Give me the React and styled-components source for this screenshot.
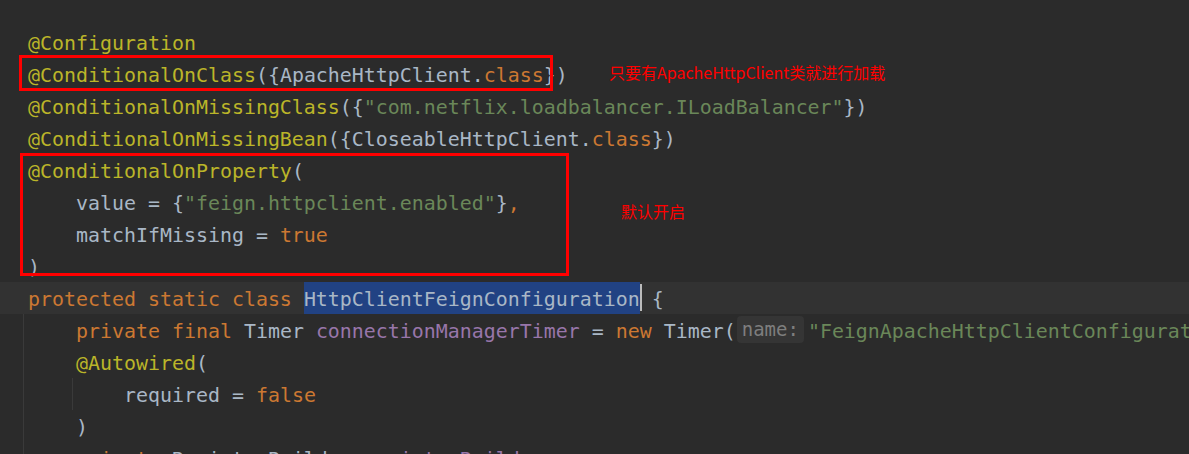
import styled, { createGlobalStyle } from 'styled-components'

const GlobalStyle = createGlobalStyle`
  html, body {
    margin: 0;
    padding: 0;
    background: #2b2b2b;
  }
`

const colors = {
  plain: '#a9b7c6',
  ann: '#bbb529',
  kw: '#cc7832',
  str: '#6a8759',
  field: '#9876aa',
}

const Screen = styled.div`
  position: relative;
  width: 1189px;
  height: 454px;
  overflow: hidden;
  background: #2b2b2b;
`

const Editor = styled.div`
  padding: 26px 0 0 28px;
  font-family: "DejaVu Sans Mono", "Liberation Mono", monospace;
  font-size: 19.93px;
  color: ${colors.plain};
`

// each row is 32px; text sits 2px lower than the row box like the IDE does
const Line = styled.div`
  height: 30px;
  padding-top: 2px;
  line-height: 32px;
  white-space: pre;
  margin-left: -28px;
  padding-left: 28px;
  background: ${(p) => (p.$current ? '#323232' : 'transparent')};
`

const Block = styled.div`
  margin-left: ${(p) => p.$offset || -5}px;
  padding-left: ${(p) => p.$pad || 4}px;
  border-left: 1px solid #3a3a3a;

  ${Line} {
    margin-left: 0;
    padding-left: 0;
  }
`

const Tok = styled.span`
  color: ${(p) => colors[p.$k] || colors.plain};
`

const Selection = styled.span`
  display: inline-block;
  height: 32px;
  margin-top: -2px;
  line-height: 36px;
  background: #214283;
  vertical-align: top;
`

const Caret = styled.span`
  display: inline-block;
  width: 2px;
  height: 27px;
  margin: 0 -2px 0 0;
  background: #bbbbbb;
  vertical-align: top;
`

const Hint = styled.span`
  display: inline-block;
  height: 27px;
  line-height: 27px;
  margin: 0 4px 0 1px;
  padding: 0 5px 0 5px;
  border-radius: 4px;
  background: #353535;
  color: #7e7e7e;
  font-size: 19px;
  vertical-align: top;
`

const Frame = styled.div`
  position: absolute;
  left: ${(p) => p.$x}px;
  top: ${(p) => p.$y}px;
  width: ${(p) => p.$w}px;
  height: ${(p) => p.$h}px;
  box-sizing: border-box;
  border: 3px solid #ff0000;
  pointer-events: none;
`

const Note = styled.div`
  position: absolute;
  left: ${(p) => p.$x}px;
  top: ${(p) => p.$y}px;
  font-family: "Noto Sans CJK SC", "Noto Sans", sans-serif;
  font-size: 16px;
  line-height: 20px;
  color: #ff0000;
  white-space: nowrap;
`

const App = () => {
  return (
    <Screen>
      <GlobalStyle />
      <Editor>
        <Line><Tok $k="ann">@Configuration</Tok></Line>
        <Line>
          <Tok $k="ann">@ConditionalOnClass</Tok>({'{'}ApacheHttpClient.<Tok $k="kw">class</Tok>{'})'}
        </Line>
        <Line>
          <Tok $k="ann">@ConditionalOnMissingClass</Tok>({'{'}
          <Tok $k="str">"com.netflix.loadbalancer.ILoadBalancer"</Tok>{'})'}
        </Line>
        <Line>
          <Tok $k="ann">@ConditionalOnMissingBean</Tok>({'{'}CloseableHttpClient.<Tok $k="kw">class</Tok>{'})'}
        </Line>
        <Line><Tok $k="ann">@ConditionalOnProperty</Tok>(</Line>
        <Line>
          {'    value = {'}<Tok $k="str">"feign.httpclient.enabled"</Tok>{'}'}<Tok $k="kw">,</Tok>
        </Line>
        <Line>
          {'    matchIfMissing = '}<Tok $k="kw">true</Tok>
        </Line>
        <Line>)</Line>
        <Line $current>
          <Tok $k="kw">protected static class </Tok>
          <Selection>HttpClientFeignConfiguration</Selection>
          <Caret />
          {' {'}
        </Line>
        <Block>
          <Line>
            <Tok $k="kw">{'    private final '}</Tok>Timer <Tok $k="field">connectionManagerTimer</Tok>
            {' = '}<Tok $k="kw">new </Tok>Timer(<Hint>name:</Hint>
            <Tok $k="str">"FeignApacheHttpClientConfiguration.connectionManagerTimer"</Tok>
            <Tok $k="kw">, true</Tok>);
          </Line>
          <Line>
            {'    '}<Tok $k="ann">@Autowired</Tok>(
          </Line>
          <Block $offset={44} $pad={3}>
            <Line>
              {'    required = '}<Tok $k="kw">false</Tok>
            </Line>
          </Block>
          <Line>{'    )'}</Line>
          <Line>
            <Tok $k="kw">{'    private '}</Tok>RegistryBuilder <Tok $k="field">registryBuilder</Tok>
            <Tok $k="kw">;</Tok>
          </Line>
        </Block>
      </Editor>

      <Frame $x={19} $y={55} $w={534} $h={36} />
      <Note $x={609} $y={62}>只要有ApacheHttpClient类就进行加载</Note>

      <Frame $x={20} $y={153} $w={549} $h={123} />
      <Note $x={621} $y={201}>默认开启</Note>
    </Screen>
  )
}

export default App
